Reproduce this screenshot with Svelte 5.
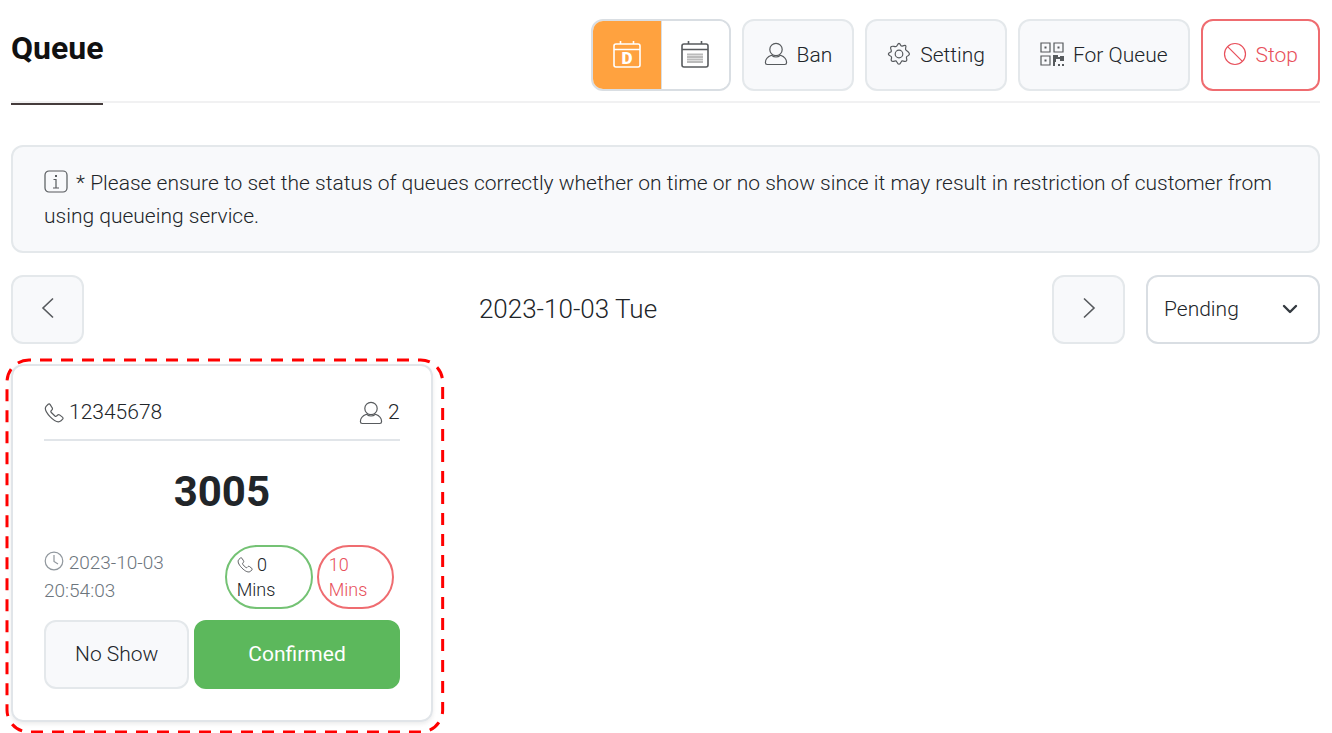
<script lang="ts">
	let view = $state('day');
	let status = $state('pending');
	let date = $state(new Date(Date.UTC(2023, 9, 3)));

	const days = ['Sun', 'Mon', 'Tue', 'Wed', 'Thu', 'Fri', 'Sat'];
	let dateLabel = $derived(`${date.toISOString().slice(0, 10)} ${days[date.getUTCDay()]}`);

	const queues = [
		{ number: 3005, phone: '12345678', people: 2, time: '2023-10-03 20:54:03', called: 0, waited: 10 }
	];

	function moveDay(step: number) {
		date = new Date(date.getTime() + step * 86400000);
	}
</script>

{#snippet person()}
	<svg class="icon" width="24" height="24" viewBox="0 0 24 24" aria-hidden="true">
		<circle cx="12" cy="7.5" r="6.2" />
		<path d="M7.5 13.2C3.6 14.6 1.4 17.6 1.4 20.6q0 1.9 1.8 1.9h17.6q1.8 0 1.8-1.9c0-3-2.2-6-6.1-7.4M7.5 13.2q4.5 3.6 9 0" />
	</svg>
{/snippet}

{#snippet phone(size: number)}
	<svg class="icon" width={size} height={size} viewBox="0 0 20 20" aria-hidden="true">
		<path d="M4.2 1.3 2.3 3.1C.4 5.2 1.6 9 6 13.6s8.5 6.3 11 4.2l1.6-1.7q.9-1.1-.2-2l-2.8-2.2q-1-.7-1.9.1l-1.1 1.1q-.8.6-1.7-.1L7.3 9.5q-.8-.8-.2-1.7l1-1.2q.7-.9 0-1.9L6.2 1.6q-1-1.2-2-.3Z" />
	</svg>
{/snippet}

<div class="queue-page">
	<header class="page-header">
		<h1 class="page-title">Queue</h1>
		<div class="actions">
			<div class="view-switch" role="group" aria-label="View">
				<button class:active={view === 'day'} aria-label="Day" aria-pressed={view === 'day'} onclick={() => (view = 'day')}>
					<svg class="icon icon--bold" width="30" height="30" viewBox="0 0 30 30" aria-hidden="true">
						<rect x="2" y="5" width="26" height="23" rx="2" />
						<path d="M2 10.5h26M8.500 2v3M21.500 2v3" />
						<text x="15" y="25" text-anchor="middle">D</text>
					</svg>
				</button>
				<button class:active={view === 'list'} aria-label="List" aria-pressed={view === 'list'} onclick={() => (view = 'list')}>
					<svg class="icon icon--bold" width="30" height="30" viewBox="0 0 30 30" aria-hidden="true">
						<rect x="2" y="5" width="26" height="23" rx="2" />
						<path d="M2 10.5h26M8.500 2v3M21.500 2v3" />
						<path class="lines" d="M7 15.5h16M7 18h16M7 20.5h16M7 23h16" />
					</svg>
				</button>
			</div>
			<button class="btn">{@render person()} Ban</button>
			<button class="btn">
				<svg class="icon" width="24" height="24" viewBox="0 0 24 24" aria-hidden="true">
					<circle cx="12" cy="12" r="3.8" />
					<path d="M10.3 3.2Q12-.6 13.7 3.2q.5 1.3 2 .7 4.300-1.900 2.900 2.400-.4 1.500.9 2.200 5 3.500 1.500 5.200-1.700.6-1.600 2.100 1.600 4.600-3 3.300-1.700-.5-2.300.9-2.100 4.500-4.200 0-.6-1.400-2.300-.9-4.600 1.300-3-3.300.1-1.500-1.600-2.100Q-.4 12 3.200 10.300q1.600-.6 1-2.100-2.100-4.700 2.900-3.800 2.600.9 3.200-1.200Z" />
				</svg>
				Setting
			</button>
			<button class="btn">
				<svg class="icon" width="24" height="24" viewBox="0 0 24 24" aria-hidden="true">
					<path d="M1 1h9v9H1zM14 1h9v9h-9zM1 14h9v9H1z" />
					<path class="solid" d="M4.5 4.5h2v2h-2zM17.5 4.5h2v2h-2zM4.5 17.5h2v2h-2zM13 13h5v2h2v-1h4v5h-4v-2h-4v3h-1v4h-2zM18 22h2v2h-2zM22 22h2v2h-2z" />
				</svg>
				For Queue
			</button>
			<button class="btn btn--danger">
				<svg class="icon" width="24" height="24" viewBox="0 0 24 24" aria-hidden="true">
					<circle cx="12" cy="12" r="10.5" />
					<path d="m4.6 4.6 14.8 14.8" />
				</svg>
				Stop
			</button>
		</div>
	</header>

	<p class="notice">
		<svg class="icon" width="24" height="24" viewBox="0 0 24 24" aria-hidden="true">
			<rect x="1" y="1" width="22" height="21" rx="4" />
			<path d="M9.5 9.5H12V18M9 18h6" />
			<path class="solid" d="M11 5h2v2h-2z" />
		</svg>
		* Please ensure to set the status of queues correctly whether on time or no show since it may result in restriction of customer from using queueing service.
	</p>

	<div class="date-bar">
		<button class="btn btn--arrow" aria-label="Previous day" onclick={() => moveDay(-1)}>
			<svg class="icon icon--bold" width="24" height="24" viewBox="0 0 24 24" aria-hidden="true"><path d="M17 2.5 7 12l10 9.5" /></svg>
		</button>
		<span class="date">{dateLabel}</span>
		<button class="btn btn--arrow" aria-label="Next day" onclick={() => moveDay(1)}>
			<svg class="icon icon--bold" width="24" height="24" viewBox="0 0 24 24" aria-hidden="true"><path d="m7 2.5 10 9.5-10 9.5" /></svg>
		</button>
		<div class="status">
			<select aria-label="Status" bind:value={status}>
				<option value="pending">Pending</option>
				<option value="confirmed">Confirmed</option>
				<option value="no-show">No Show</option>
			</select>
			<svg class="status-arrow" width="16" height="16" viewBox="0 0 16 16" aria-hidden="true"><path d="m2 5 6 6 6-6" /></svg>
		</div>
	</div>

	<div class="queue-grid">
		{#each queues as queue (queue.number)}
			<article class="card">
				<svg class="card-outline" aria-hidden="true"><rect width="100%" height="100%" rx="22" /></svg>
				<div class="card-head">
					<span>{@render phone(20)} {queue.phone}</span>
					<span>{@render person()} {queue.people}</span>
				</div>
				<h2 class="number">{queue.number}</h2>
				<div class="card-info">
					<p class="time">
						<svg class="icon" width="20" height="20" viewBox="0 0 20 20" aria-hidden="true">
							<circle cx="10" cy="10" r="8.8" />
							<path d="M10 4v6.5l4 2.5" />
						</svg>
						{queue.time}
					</p>
					<span class="pill pill--called">{@render phone(16)} {queue.called} Mins</span>
					<span class="pill pill--waited">{queue.waited} Mins</span>
				</div>
				<div class="card-actions">
					<button class="btn">No Show</button>
					<button class="btn btn--success">Confirmed</button>
				</div>
			</article>
		{/each}
	</div>
</div>

<style>
	:global(body) {
		background: #fff;
	}

	.queue-page {
		padding: 19px 12px 12px 11px;
		font-family: Roboto, sans-serif;
		font-size: 21px;
		font-weight: 300;
		line-height: 33px;
		color: #212529;
	}

	h1, h2, p {
		margin: 0;
	}

	button, select {
		font: inherit;
		color: inherit;
		cursor: pointer;
	}

	.icon {
		fill: none;
		stroke: currentColor;
		stroke-width: 1.2;
		flex: none;
		opacity: 0.75;
	}

	.icon--bold {
		stroke-width: 1.6;
	}

	.active .icon,
	.btn--danger .icon {
		opacity: 1;
	}

	.icon text {
		font-size: 17px;
		font-weight: 900;
		fill: currentColor;
		stroke: none;
	}

	.solid {
		fill: currentColor;
		stroke: none;
	}

	.lines {
		stroke: #a5a5a5;
		stroke-width: 2;
	}

	.page-header {
		display: flex;
		justify-content: space-between;
		padding-bottom: 10px;
		border-bottom: 2px solid #f1f1f2;
	}

	.page-title {
		margin-bottom: -14px;
		border-bottom: 2px solid #453c3c;
		font-size: 32px;
		font-weight: 700;
		line-height: 59px;
		color: #111;
	}

	.actions {
		display: flex;
		gap: 11px;
	}

	.actions .icon {
		margin-bottom: 3px;
	}

	.view-switch {
		display: flex;
		border: 2px solid #d9dee3;
		border-radius: 12px;
		overflow: hidden;
	}

	.view-switch button {
		display: flex;
		align-items: center;
		justify-content: center;
		width: 68px;
		padding: 0;
		border: 0;
		background: #fff;
	}

	.view-switch button + button {
		border-left: 1px solid #d9dee3;
	}

	.view-switch button.active {
		background: #ffa23f;
		color: #fff;
	}

	.btn {
		display: flex;
		align-items: center;
		justify-content: center;
		gap: 9px;
		min-height: 69px;
		padding: 0 20px;
		border: 2px solid #e4e8eb;
		border-radius: 12px;
		background: #f8f9fb;
		white-space: nowrap;
	}

	.actions .btn {
		min-height: 72px;
	}

	.btn--danger {
		border-color: #ef6c70;
		background: #fff;
		color: #e8505b;
	}

	.btn--success {
		border-color: #5cb85c;
		background: #5cb85c;
		color: #fff;
		font-weight: 400;
	}

	.btn--arrow {
		width: 73px;
	}

	.btn--arrow .icon {
		margin-bottom: 3px;
	}

	.notice {
		margin-top: 42px;
		padding: 20px 31px 18px;
		border: 2px solid #e4e8eb;
		border-radius: 12px;
		background: #f8f9fb;
	}

	.notice .icon {
		margin-right: 3px;
		vertical-align: -4px;
	}

	.date-bar {
		display: flex;
		align-items: center;
		margin-top: 22px;
	}

	.date {
		flex: 1;
		font-size: 26px;
		text-align: center;
	}

	.status {
		position: relative;
		width: 174px;
		margin-left: 21px;
	}

	select {
		appearance: none;
		display: block;
		width: 100%;
		height: 69px;
		padding: 0 48px 0 16px;
		border: 2px solid #d9dee3;
		border-radius: 12px;
		background: #fff;
	}

	.status-arrow {
		position: absolute;
		top: 26px;
		right: 22px;
		fill: none;
		stroke: #343a40;
		stroke-width: 2.4;
		stroke-linecap: round;
		stroke-linejoin: round;
		pointer-events: none;
	}

	.queue-grid {
		display: grid;
		grid-template-columns: repeat(3, 1fr);
		gap: 22px;
		margin-top: 20px;
	}

	.card {
		position: relative;
		padding: 30px 31px 31px;
		border: 2px solid #e1e5e9;
		border-radius: 12px;
		box-shadow: 0 2px 4px rgb(0 0 0 / 8%);
	}

	/* dashed frame drawn around the card */
	.card-outline {
		position: absolute;
		top: -6px;
		left: -6px;
		width: calc(100% + 18px);
		height: calc(100% + 18px);
		overflow: visible;
		fill: none;
		stroke: #f00;
		stroke-width: 3;
		stroke-dasharray: 12 9;
		stroke-dashoffset: 10;
		pointer-events: none;
	}

	.card-head {
		display: flex;
		justify-content: space-between;
		padding-bottom: 10px;
		border-bottom: 2px solid #e1e5e9;
	}

	.card-head span {
		display: flex;
		align-items: center;
		gap: 5px;
	}

	.number {
		padding: 20px 0 22px;
		font-size: 42px;
		font-weight: 700;
		line-height: 62px;
		text-align: center;
	}

	.card-info {
		display: flex;
		align-items: center;
		gap: 4px;
		padding-right: 6px;
	}

	.time {
		flex: 1;
		font-size: 19px;
		line-height: 28px;
		color: #6c757d;
	}

	.time .icon, .pill .icon {
		vertical-align: -2px;
	}

	.pill {
		box-sizing: border-box;
		padding: 5px 10px;
		border: 2px solid;
		border-radius: 32px;
		font-size: 18px;
		line-height: 25px;
	}

	.pill--called {
		width: 88px;
		border-color: #74c274;
	}

	.pill--waited {
		width: 77px;
		border-color: #ef6c70;
		color: #e8505b;
	}

	.card-actions {
		display: flex;
		gap: 5px;
		margin-top: 11px;
	}

	.card-actions .btn {
		padding: 0 29px;
	}

	.card-actions .btn--success {
		flex: 1;
	}
</style>
